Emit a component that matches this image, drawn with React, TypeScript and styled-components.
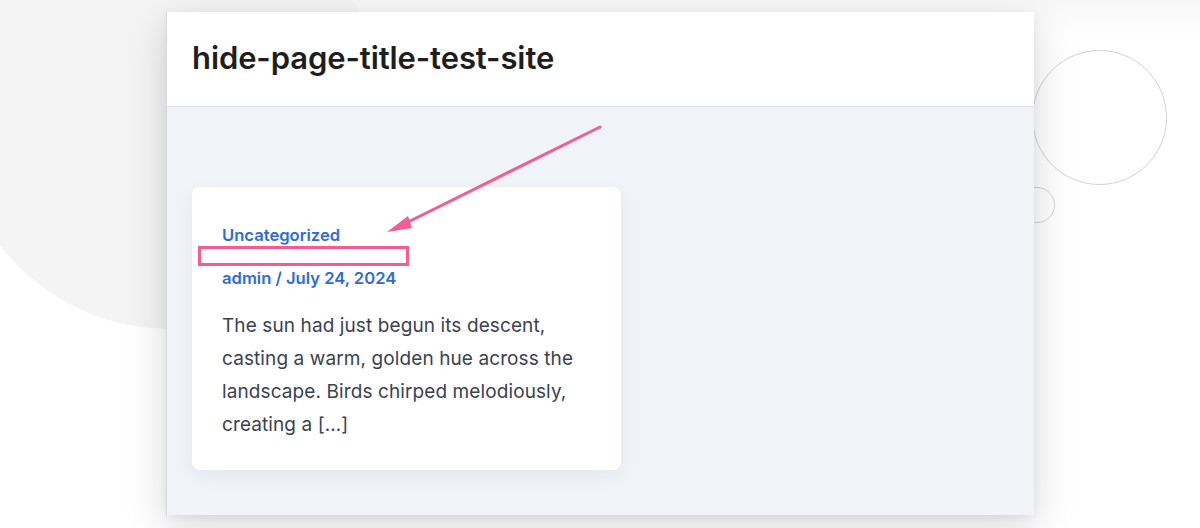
import styled, { createGlobalStyle } from 'styled-components';

const GlobalStyle = createGlobalStyle`
  html, body {
    margin: 0;
    padding: 0;
    background: #ffffff;
  }
  * {
    box-sizing: border-box;
  }
`;

const pink = '#f45d94';
const blue = '#2f6bd5';

const Stage = styled.div`
  position: relative;
  width: 1200px;
  height: 528px;
  overflow: hidden;
  background: linear-gradient(180deg, #f7f7f8 0px, #ffffff 40px);
  padding: 12px 0 0 166px;
  font-family: Inter, 'Noto Sans', sans-serif;
`;

const Blob = styled.div`
  position: absolute;
  left: -45px;
  top: -101px;
  width: 430px;
  height: 430px;
  border-radius: 50%;
  background: #f4f4f5;
`;

const Ring = styled.div<{ $size: number; $x: number; $y: number }>`
  position: absolute;
  left: ${(p) => p.$x}px;
  top: ${(p) => p.$y}px;
  width: ${(p) => p.$size}px;
  height: ${(p) => p.$size}px;
  border-radius: 50%;
  border: 1px solid #d2d2d2;
`;

const Window = styled.div`
  position: relative;
  width: 868px;
  height: 503px;
  border-left: 1px solid #d9d9dc;
  background: #f0f3f8;
  box-shadow: 0 12px 40px rgba(0, 0, 0, 0.16), 0 2px 8px rgba(0, 0, 0, 0.05);
  display: flex;
  flex-direction: column;
`;

const Header = styled.header`
  height: 95px;
  background: #ffffff;
  border-bottom: 1px solid #e3e5e9;
  display: flex;
  align-items: center;
  padding: 0 0 4px 25px;
`;

const SiteTitle = styled.h1`
  margin: 0;
  font-size: 31px;
  font-weight: 600;
  color: #1e1e1e;
  letter-spacing: -0.1px;
`;

const Content = styled.main`
  flex: 1;
  padding: 80px 0 0 25px;
`;

const Card = styled.article`
  width: 429px;
  height: 283px;
  background: #ffffff;
  border-radius: 8px;
  box-shadow: 0 6px 18px rgba(30, 40, 60, 0.06);
  padding: 36px 30px 28px;
`;

const MetaLink = styled.a`
  display: block;
  font-size: 16.6px;
  line-height: 24px;
  font-weight: 600;
  color: ${blue};
  text-decoration: none;
`;

const HiddenTitle = styled.div`
  width: 211px;
  height: 20px;
  margin: -1px 0 0 -24px;
  border: 3px solid ${pink};
`;

const Excerpt = styled.p`
  margin: 19px 0 0;
  font-size: 19px;
  line-height: 33px;
  letter-spacing: 0.1px;
  color: #3a4252;
`;

const Annotation = styled.svg`
  position: absolute;
  left: 0;
  top: 0;
  pointer-events: none;
`;

export default function App() {
  return (
    <>
      <GlobalStyle />
      <Stage>
        <Blob />
        <Ring $size={135} $x={1032} $y={50} />
        <Ring $size={36} $x={1019} $y={187} />
        <Window>
          <Header>
            <SiteTitle>hide-page-title-test-site</SiteTitle>
          </Header>
          <Content>
            <Card>
              <MetaLink href="#">Uncategorized</MetaLink>
              <HiddenTitle />
              <MetaLink href="#">admin / July 24, 2024</MetaLink>
              <Excerpt>
                The sun had just begun its descent, casting a warm, golden hue across the
                landscape. Birds chirped melodiously, creating a […]
              </Excerpt>
            </Card>
          </Content>
        </Window>
        <Annotation width="1200" height="528" viewBox="0 0 1200 528">
          <line x1="600" y1="127" x2="402" y2="225" stroke={pink} strokeWidth="3" strokeLinecap="round" />
          <polygon points="387,232 408,216 412,228" fill={pink} />
        </Annotation>
      </Stage>
    </>
  );
}
